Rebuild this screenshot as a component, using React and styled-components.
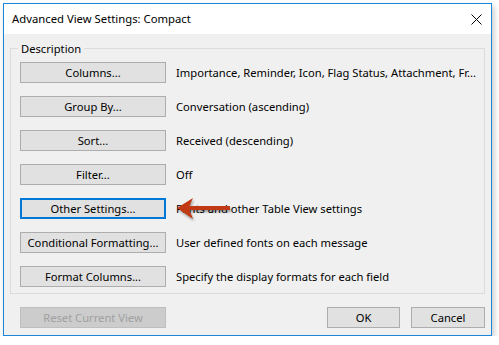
import React from "react";
import styled, { createGlobalStyle } from "styled-components";

const GlobalStyle = createGlobalStyle`
  html, body {
    margin: 0;
    padding: 0;
    background: #ffffff;
  }
  body {
    font-family: "Segoe UI", "Noto Sans", "Liberation Sans", sans-serif;
    font-size: 11.2px;
    color: #000;
  }
`;

const Page = styled.div`
  padding: 3px 0 0 3px;
`;

const Window = styled.div`
  width: 489px;
  height: 333px;
  box-sizing: border-box;
  border: 1px solid #1c86d8;
  background: #f0f0f0;
  box-shadow: 2px 3px 6px rgba(0, 0, 0, 0.22);
  display: flex;
  flex-direction: column;
`;

const TitleBar = styled.div`
  height: 30px;
  flex-shrink: 0;
  background: #ffffff;
  display: flex;
  align-items: center;
  justify-content: space-between;
  padding: 0 9px 0 8px;
`;

const Title = styled.span`
  font-size: 11.3px;
  line-height: 16px;
`;

const CloseIcon = styled.svg`
  display: block;
  width: 11px;
  height: 11px;
`;

const Body = styled.div`
  padding: 14px 6px 0 6px;
`;

const GroupBox = styled.div`
  border: 1px solid #dcdcdc;
  padding: 0 9px 6px 9px;
`;

const Caption = styled.div`
  width: fit-content;
  margin: -8px 0 0 -2px;
  padding: 0 3px;
  line-height: 16px;
  background: #f0f0f0;
`;

const Rows = styled.div`
  display: flex;
  flex-direction: column;
  gap: 13px;
  padding-top: 5px;
`;

const Row = styled.div`
  display: flex;
  align-items: center;
  gap: 10px;
  height: 21px;
  position: relative;
`;

const Button = styled.button`
  box-sizing: border-box;
  width: ${(p) => p.$width || 146}px;
  height: 21px;
  padding: 0 4px;
  margin: 0;
  font-family: inherit;
  font-size: 11.2px;
  line-height: 16px;
  color: ${(p) => (p.disabled ? "#a0a0a0" : "#000")};
  background: ${(p) => (p.disabled ? "#cccccc" : "#e1e1e1")};
  border: ${(p) =>
    p.$focused ? "2px solid #0078d7" : p.disabled ? "1px solid #bfbfbf" : "1px solid #adadad"};
  white-space: nowrap;
  flex-shrink: 0;
`;

const Label = styled.span`
  white-space: nowrap;
  line-height: 16px;
`;

const Arrow = styled.svg`
  position: absolute;
  left: 154px;
  top: -3px;
  width: 60px;
  height: 28px;
  filter: drop-shadow(1px 2px 1px rgba(0, 0, 0, 0.35));
`;

const Footer = styled.div`
  display: flex;
  align-items: center;
  gap: 11px;
  padding: 13px 0 0 10px;
`;

const Spacer = styled.div`
  flex: 1;
`;

const rows = [
  { name: "Columns...", text: "Importance, Reminder, Icon, Flag Status, Attachment, Fr..." },
  { name: "Group By...", text: "Conversation (ascending)" },
  { name: "Sort...", text: "Received (descending)" },
  { name: "Filter...", text: "Off" },
  { name: "Other Settings...", text: "Fonts and other Table View settings", focused: true },
  { name: "Conditional Formatting...", text: "User defined fonts on each message" },
  { name: "Format Columns...", text: "Specify the display formats for each field" },
];

const App = () => {
  return (
    <Page>
      <GlobalStyle />
      <Window>
        <TitleBar>
          <Title>Advanced View Settings: Compact</Title>
          <CloseIcon viewBox="0 0 11 11">
            <path d="M0.5 0.5 L10.5 10.5 M10.5 0.5 L0.5 10.5" stroke="#000" strokeWidth="1" />
          </CloseIcon>
        </TitleBar>
        <Body>
          <GroupBox>
            <Caption>Description</Caption>
            <Rows>
              {rows.map((r) => (
                <Row key={r.name}>
                  <Button $focused={r.focused}>{r.name}</Button>
                  <Label>{r.text}</Label>
                  {r.focused && (
                    <Arrow viewBox="0 0 60 28">
                      <path
                        d="M3 13 L19 3 L15.5 11 L56 11 L56 15 L15.5 15 L19 24 Z"
                        fill="#c13a14"
                      />
                    </Arrow>
                  )}
                </Row>
              ))}
            </Rows>
          </GroupBox>
          <Footer>
            <Button disabled>Reset Current View</Button>
            <Spacer />
            <Button $width={73}>OK</Button>
            <Button $width={74}>Cancel</Button>
          </Footer>
        </Body>
      </Window>
    </Page>
  );
};

export default App;
